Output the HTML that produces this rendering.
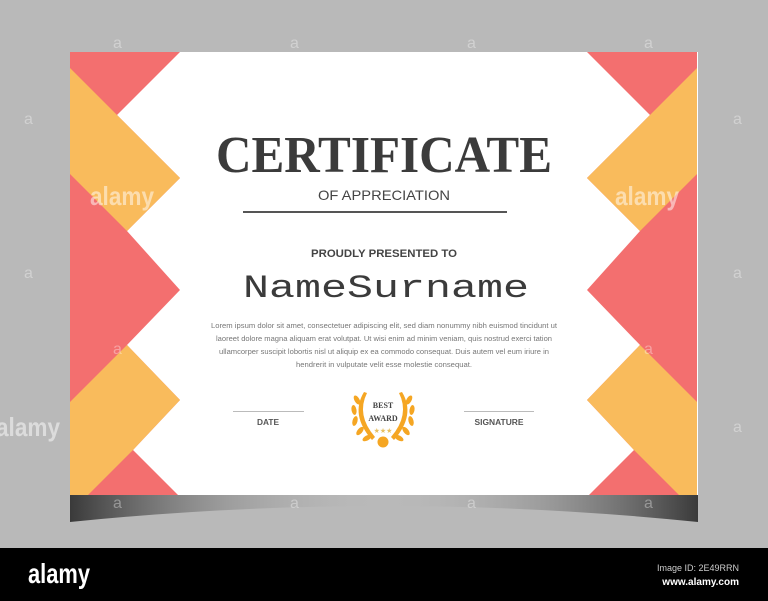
<!DOCTYPE html>
<html><head><meta charset="utf-8"><style>
html,body{margin:0;padding:0;background:#b9b9b9;}
svg{display:block}
</style></head><body>
<svg width="768" height="601" viewBox="0 0 768 601" xmlns="http://www.w3.org/2000/svg">
<defs>
<linearGradient id="sh" x1="0" x2="1" y1="0" y2="0">
<stop offset="0" stop-color="#3a3a3a"/>
<stop offset="0.25" stop-color="#8a8a8a" stop-opacity="0.6"/>
<stop offset="0.5" stop-color="#b9b9b9" stop-opacity="0"/>
<stop offset="0.75" stop-color="#8a8a8a" stop-opacity="0.6"/>
<stop offset="1" stop-color="#3a3a3a"/>
</linearGradient>
<g id="side">
<polygon points="70,52 180,52 117,115 180,178 127,231 180,290 127,345 180,400 133,450 178,495 70,495" fill="#f36f6f"/>
<polygon points="70,68 117,115 180,178 127,231 70,174" fill="#f9bb5c"/>
<polygon points="70,402 127,345 180,400 133,450 88,495 70,495" fill="#f9bb5c"/>
</g>
</defs>
<rect width="768" height="601" fill="#b9b9b9"/>
<path d="M70,495 L698,495 L698,522 Q384,490 70,522 Z" fill="url(#sh)"/>
<rect x="70" y="52" width="628" height="443" fill="#ffffff"/>
<use href="#side"/>
<use href="#side" transform="translate(767,0) scale(-1,1)"/>

<text x="384" y="172" text-anchor="middle" font-family="Liberation Serif, serif" font-weight="bold" font-size="52" fill="#3b3b3b" textLength="336" lengthAdjust="spacingAndGlyphs">CERTIFICATE</text>
<text x="384" y="200" text-anchor="middle" font-family="Liberation Sans, sans-serif" font-size="14" fill="#444" textLength="132" lengthAdjust="spacingAndGlyphs">OF APPRECIATION</text>
<rect x="243" y="211" width="264" height="2" fill="#555"/>
<text x="384" y="257" text-anchor="middle" font-family="Liberation Sans, sans-serif" font-weight="bold" font-size="11" fill="#444" textLength="146" lengthAdjust="spacingAndGlyphs">PROUDLY PRESENTED TO</text>
<text x="386" y="297" text-anchor="middle" font-family="Liberation Mono, monospace" font-size="32" fill="#3b3b3b" textLength="286" lengthAdjust="spacingAndGlyphs">NameSurname</text>
<g font-family="Liberation Sans, sans-serif" font-size="7.6" fill="#777" text-anchor="middle">
<text x="384" y="328" textLength="346" lengthAdjust="spacingAndGlyphs">Lorem ipsum dolor sit amet, consectetuer adipiscing elit, sed diam nonummy nibh euismod tincidunt ut</text>
<text x="384" y="341" textLength="336" lengthAdjust="spacingAndGlyphs">laoreet dolore magna aliquam erat volutpat. Ut wisi enim ad minim veniam, quis nostrud exerci tation</text>
<text x="384" y="354" textLength="330" lengthAdjust="spacingAndGlyphs">ullamcorper suscipit lobortis nisl ut aliquip ex ea commodo consequat. Duis autem vel eum iriure in</text>
<text x="384" y="367" textLength="176" lengthAdjust="spacingAndGlyphs">hendrerit in vulputate velit esse molestie consequat.</text>
</g>
<rect x="233" y="411" width="71" height="1" fill="#bbb"/>
<rect x="464" y="411" width="70" height="1" fill="#bbb"/>
<text x="268" y="425" text-anchor="middle" font-family="Liberation Sans, sans-serif" font-weight="bold" font-size="8" fill="#555" textLength="22" lengthAdjust="spacingAndGlyphs">DATE</text>
<text x="499" y="425" text-anchor="middle" font-family="Liberation Sans, sans-serif" font-weight="bold" font-size="8" fill="#555" textLength="49" lengthAdjust="spacingAndGlyphs">SIGNATURE</text>

<g fill="#f5a623">
<path d="M364,392 Q350,415 372,440 L375,437 Q356,415 367,393 Z"/>
<path d="M402,392 Q416,415 394,440 L391,437 Q410,415 399,393 Z"/>
<ellipse cx="357" cy="400" rx="2.5" ry="5" transform="rotate(-30 357 400)"/>
<ellipse cx="354" cy="410" rx="2.5" ry="5" transform="rotate(-10 354 410)"/>
<ellipse cx="355" cy="421" rx="2.5" ry="5" transform="rotate(15 355 421)"/>
<ellipse cx="360" cy="431" rx="2.5" ry="5" transform="rotate(40 360 431)"/>
<ellipse cx="367" cy="438" rx="2.5" ry="5" transform="rotate(60 367 438)"/>
<ellipse cx="409" cy="400" rx="2.5" ry="5" transform="rotate(30 409 400)"/>
<ellipse cx="412" cy="410" rx="2.5" ry="5" transform="rotate(10 412 410)"/>
<ellipse cx="411" cy="421" rx="2.5" ry="5" transform="rotate(-15 411 421)"/>
<ellipse cx="406" cy="431" rx="2.5" ry="5" transform="rotate(-40 406 431)"/>
<ellipse cx="399" cy="438" rx="2.5" ry="5" transform="rotate(-60 399 438)"/>
<circle cx="383" cy="442" r="5.5"/>
</g>
<text x="383" y="408" text-anchor="middle" font-family="Liberation Serif, serif" font-weight="bold" font-size="8" fill="#444">BEST</text>
<text x="383" y="421" text-anchor="middle" font-family="Liberation Serif, serif" font-weight="bold" font-size="8" fill="#444">AWARD</text>
<text x="383" y="433" text-anchor="middle" font-size="7" fill="#e8c060" font-family="DejaVu Sans, sans-serif">★★★</text>

<g font-family="Liberation Sans, sans-serif" font-weight="bold" fill="#fff">
<g fill-opacity="0.5">
<text x="90" y="205" font-size="26" textLength="64" lengthAdjust="spacingAndGlyphs">alamy</text>
<text x="615" y="205" font-size="26" textLength="64" lengthAdjust="spacingAndGlyphs">alamy</text>
<text x="-4" y="436" font-size="26" textLength="64" lengthAdjust="spacingAndGlyphs">alamy</text>
</g>
<g font-size="16" fill-opacity="0.35" font-weight="normal">
<text x="113" y="48">a</text><text x="290" y="48">a</text><text x="467" y="48">a</text><text x="644" y="48">a</text>
<text x="24" y="124">a</text><text x="733" y="124">a</text>
<text x="24" y="278">a</text><text x="733" y="278">a</text>
<text x="113" y="354">a</text><text x="644" y="354">a</text>
<text x="733" y="432">a</text>
<text x="113" y="508">a</text><text x="290" y="508">a</text><text x="467" y="508">a</text><text x="644" y="508">a</text>
</g>
</g>

<rect x="0" y="548" width="768" height="53" fill="#000"/>
<text x="28" y="583" font-family="Liberation Sans, sans-serif" font-weight="bold" font-size="28" fill="#fff" textLength="62" lengthAdjust="spacingAndGlyphs">alamy</text>
<text x="739" y="571" text-anchor="end" font-family="Liberation Sans, sans-serif" font-size="9" fill="#ccc">Image ID: 2E49RRN</text>
<text x="739" y="585" text-anchor="end" font-family="Liberation Sans, sans-serif" font-weight="bold" font-size="10" fill="#fff">www.alamy.com</text>
</svg>
</body></html>
